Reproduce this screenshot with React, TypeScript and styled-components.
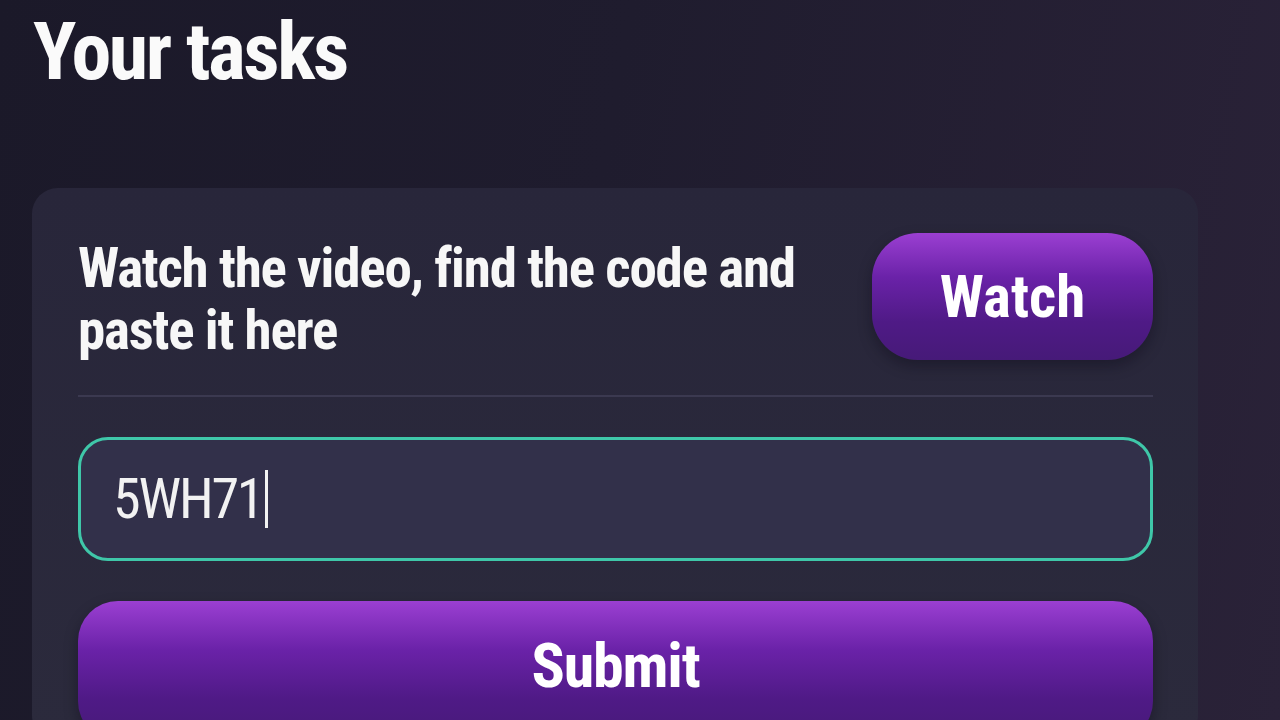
import styled, { createGlobalStyle } from 'styled-components'

const GlobalStyle = createGlobalStyle`
  html, body {
    margin: 0;
    padding: 0;
    width: 1280px;
    height: 720px;
    overflow: hidden;
  }
  body {
    font-family: Roboto, "Liberation Sans", sans-serif;
    background: linear-gradient(100deg, #1b1929 0%, #1f1c2e 45%, #2a2238 100%);
    color: #ffffff;
  }
`

const Page = styled.div`
  width: 1280px;
  height: 720px;
  box-sizing: border-box;
  padding: 9px 82px 0 32px;
  display: flex;
  flex-direction: column;
  gap: 93px;
`

const Heading = styled.h1`
  margin: 0 0 0 1px;
  font-size: 80px;
  font-weight: 700;
  line-height: 86px;
  font-stretch: 80%;
  letter-spacing: -2.4px;
  color: #fafafa;
`

const Card = styled.section`
  background: linear-gradient(180deg, #28263a 0%, #2b2a3c 100%);
  border-radius: 26px;
  padding: 45px 45px 0 46px;
  display: flex;
  flex-direction: column;
  height: 560px;
`

const TaskRow = styled.div`
  display: flex;
  justify-content: space-between;
  align-items: flex-start;
  padding-bottom: 34px;
  border-bottom: 2px solid #3b3950;
`

const TaskText = styled.p`
  margin: 0;
  padding-top: 4px;
  font-size: 55px;
  font-weight: 700;
  line-height: 62px;
  font-stretch: 82%;
  letter-spacing: -1.2px;
  max-width: 760px;
  color: #f7f7f7;
`

const Button = styled.button<{ $wide?: boolean }>`
  border: none;
  font-family: inherit;
  color: #ffffff;
  font-weight: 700;
  background: linear-gradient(180deg, #9b3fd2 0%, #6a22a8 35%, #4f1a86 70%, #461a78 100%);
  box-shadow: 0 6px 14px rgba(10, 5, 20, 0.35);
  width: ${({ $wide }) => ($wide ? '100%' : '281px')};
  height: ${({ $wide }) => ($wide ? '140px' : '127px')};
  border-radius: ${({ $wide }) => ($wide ? '40px' : '46px')};
  font-size: ${({ $wide }) => ($wide ? '62px' : '59px')};
  font-stretch: 85%;
  letter-spacing: ${({ $wide }) => ($wide ? '-1.2px' : '0')};
  padding: 0;
  padding-bottom: ${({ $wide }) => ($wide ? '12px' : '0')};
  cursor: pointer;
`

const CodeField = styled.div`
  margin-top: 40px;
  height: 124px;
  box-sizing: border-box;
  border: 3px solid #3fc7a9;
  border-radius: 30px;
  background: #32304a;
  display: flex;
  align-items: center;
  padding: 0 0 0 32px;
  font-size: 56px;
  font-weight: 400;
  font-stretch: 76%;
  letter-spacing: -2.2px;
  color: #f2f2f2;
`

const Caret = styled.span`
  display: inline-block;
  width: 3px;
  height: 58px;
  margin-left: 3px;
  background: #f2f2f2;
`

const SubmitWrap = styled.div`
  margin-top: 40px;
`

const App = () => {
  return (
    <>
      <GlobalStyle />
      <Page>
        <Heading>Your tasks</Heading>
        <Card>
          <TaskRow>
            <TaskText>Watch the video, find the code and paste it here</TaskText>
            <Button>Watch</Button>
          </TaskRow>
          <CodeField>
            5WH71
            <Caret />
          </CodeField>
          <SubmitWrap>
            <Button $wide>Submit</Button>
          </SubmitWrap>
        </Card>
      </Page>
    </>
  )
}

export default App
